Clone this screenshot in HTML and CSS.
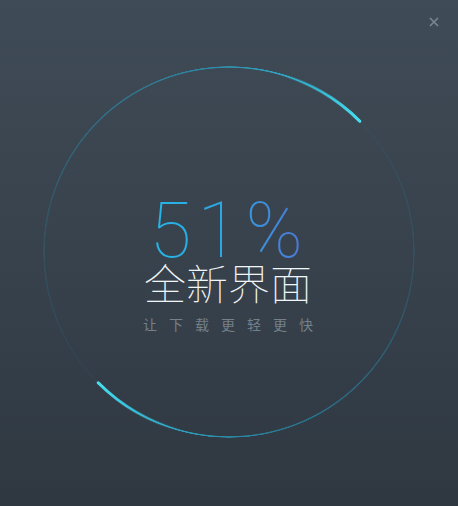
FILE: index.html
```html
<!DOCTYPE html>
<html lang="zh-CN">
<head>
<meta charset="utf-8">
<title>全新界面</title>
<link rel="stylesheet" href="styles.css">
</head>
<body>
<div class="window">
  <button class="close" aria-label="关闭">
    <svg viewBox="0 0 10 10" width="10" height="10"><path d="M1 1L9 9M9 1L1 9" /></svg>
  </button>
  <div class="stage">
    <div class="ring"></div>
    <svg class="heads" viewBox="0 0 372 372" width="372" height="372">
      <defs>
        <linearGradient id="g1" gradientUnits="userSpaceOnUse" x1="233.9" y1="7.3" x2="316.8" y2="55.2">
          <stop offset="0" stop-color="#3fdcf2" stop-opacity="0"/>
          <stop offset="1" stop-color="#55ecf8" stop-opacity="1"/>
        </linearGradient>
        <linearGradient id="g2" gradientUnits="userSpaceOnUse" x1="138.1" y1="364.7" x2="55.2" y2="316.8">
          <stop offset="0" stop-color="#3fdcf2" stop-opacity="0"/>
          <stop offset="1" stop-color="#55ecf8" stop-opacity="1"/>
        </linearGradient>
      </defs>
      <path d="M233.9 7.3A185 185 0 0 1 316.8 55.2" stroke="url(#g1)"/>
      <path d="M138.1 364.7A185 185 0 0 1 55.2 316.8" stroke="url(#g2)"/>
    </svg>
    <div class="info">
      <div class="pct">51%</div>
      <div class="title">全新界面</div>
      <div class="sub">让下载更轻更快</div>
    </div>
  </div>
</div>
</body>
</html>
```
FILE: styles.css
```css
* { box-sizing: border-box; }
html, body { margin: 0; padding: 0; }
body { background: #333c46; }
.window {
  position: relative;
  width: 458px;
  height: 506px;
  overflow: hidden;
  padding-top: 66px;
  background: linear-gradient(180deg, #3f4b56 0%, #38424d 50%, #2f3841 100%);
  font-family: "Noto Sans CJK SC", "Noto Sans", sans-serif;
}
.close {
  position: absolute;
  top: 17px;
  right: 19px;
  width: 10px;
  height: 10px;
  padding: 0;
  border: 0;
  background: none;
  display: flex;
}
.close svg path {
  stroke: #7b8792;
  stroke-width: 1.6;
  fill: none;
}
.stage {
  width: 372px;
  height: 372px;
  margin: 0 auto;
  display: grid;
}
.stage > * { grid-area: 1 / 1; }
.ring {
  width: 372px;
  height: 372px;
  border-radius: 50%;
  background: conic-gradient(from 45deg,
    rgba(30, 170, 215, 0.04) 0deg,
    rgba(30, 170, 215, 0.18) 60deg,
    rgba(35, 180, 225, 0.5) 120deg,
    rgba(45, 200, 235, 0.85) 165deg,
    rgba(60, 220, 240, 1) 180deg,
    rgba(30, 170, 215, 0.04) 180.01deg,
    rgba(30, 170, 215, 0.18) 240deg,
    rgba(35, 180, 225, 0.5) 300deg,
    rgba(45, 200, 235, 0.85) 345deg,
    rgba(60, 220, 240, 1) 360deg);
  -webkit-mask: radial-gradient(circle closest-side, transparent calc(100% - 2.2px), #000 calc(100% - 1.4px), #000 calc(100% - 0.4px), transparent 100%);
  mask: radial-gradient(circle closest-side, transparent calc(100% - 2.2px), #000 calc(100% - 1.4px), #000 calc(100% - 0.4px), transparent 100%);
}
.heads path {
  fill: none;
  stroke-width: 3;
  stroke-linecap: round;
}
.info {
  align-self: start;
  justify-self: center;
  margin-top: 132px;
  margin-right: 2px;
  display: flex;
  flex-direction: column;
  align-items: center;
}
.pct {
  font-family: Roboto, "Noto Sans", sans-serif;
  font-weight: 100;
  font-size: 77px;
  line-height: 66px;
  letter-spacing: 6px;
  margin-right: -6px;
  margin-left: -4px;
  background: linear-gradient(90deg, #25b6e6 0%, #2ea6e2 45%, #4f74d4 100%);
  -webkit-background-clip: text;
  background-clip: text;
  color: transparent;
}
.title {
  font-family: "Noto Sans CJK SC", sans-serif;
  font-weight: 100;
  font-size: 42px;
  line-height: 36px;
  color: #f2f5f7;
}
.sub {
  margin-top: 16px;
  padding-left: 12px;
  font-family: "Noto Sans CJK SC", sans-serif;
  font-weight: 400;
  font-size: 14px;
  line-height: 16px;
  letter-spacing: 12px;
  color: #74808a;
}
```
